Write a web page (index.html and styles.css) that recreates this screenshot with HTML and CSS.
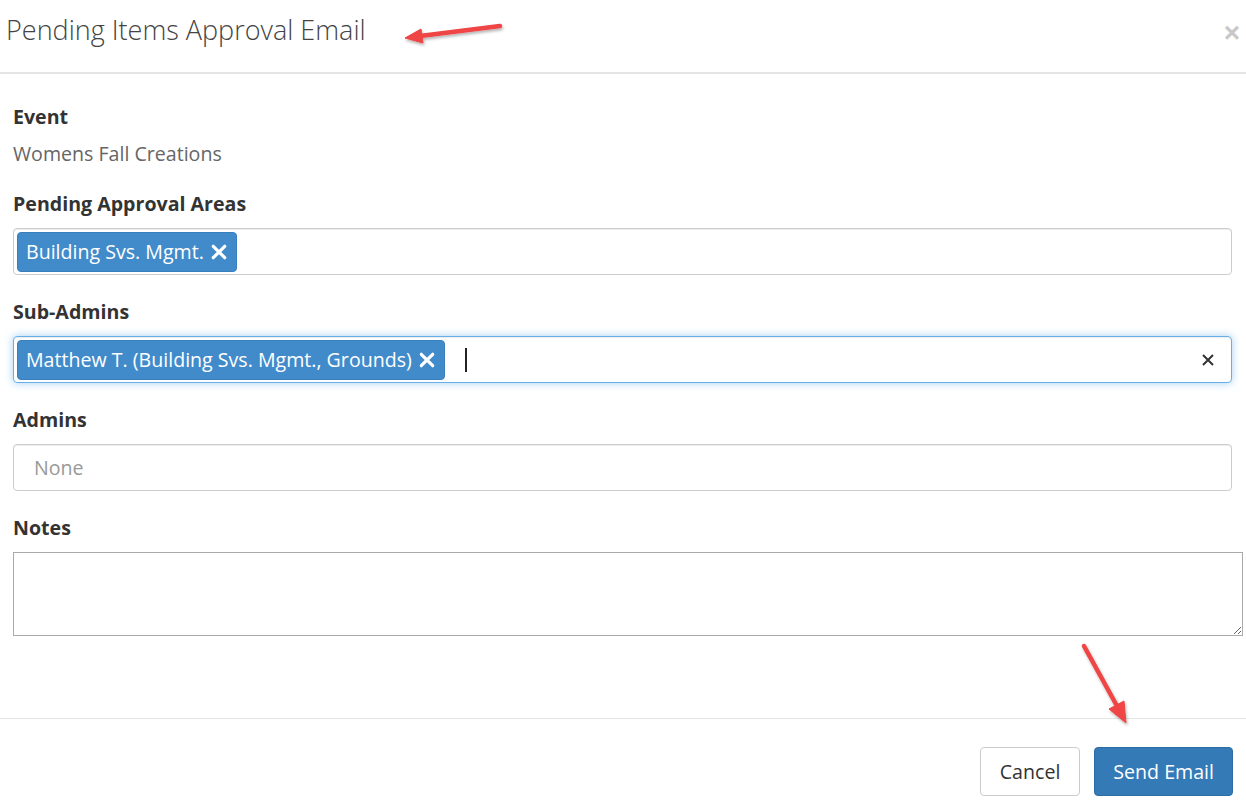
FILE: index.html
```html
<!DOCTYPE html>
<html lang="en">
<head>
    <meta charset="UTF-8">
    <meta name="viewport" content="width=device-width, initial-scale=1.0">
    <title>Pending Items Approval Email</title>
    <link rel="stylesheet" href="styles.css">
</head>
<body>
    <div class="modal">
        <div class="modal-header">
            <h4 class="modal-title">Pending Items Approval Email</h4>
            <button class="close" type="button">&times;</button>
        </div>

        <div class="modal-body">
            <div class="form-group">
                <label>Event</label>
                <div class="static">Womens Fall Creations</div>
            </div>

            <div class="form-group">
                <label>Pending Approval Areas</label>
                <div class="tag-input">
                    <span class="tag">Building Svs. Mgmt.
                        <svg class="tag-x" viewBox="0 0 14 14"><path d="M2 2L12 12M12 2L2 12"/></svg>
                    </span>
                </div>
            </div>

            <div class="form-group">
                <label>Sub-Admins</label>
                <div class="tag-input focused">
                    <span class="tag">Matthew T. (Building Svs. Mgmt., Grounds)
                        <svg class="tag-x" viewBox="0 0 14 14"><path d="M2 2L12 12M12 2L2 12"/></svg>
                    </span>
                    <span class="caret"></span>
                    <svg class="clear-x" viewBox="0 0 12 12"><path d="M1 1L11 11M11 1L1 11"/></svg>
                </div>
            </div>

            <div class="form-group">
                <label>Admins</label>
                <input class="form-control" type="text" placeholder="None">
            </div>

            <div class="form-group">
                <label>Notes</label>
                <textarea class="notes"></textarea>
            </div>
        </div>

        <div class="modal-footer">
            <button class="btn btn-default" type="button">Cancel</button>
            <button class="btn btn-primary" type="button">Send Email</button>
        </div>

        <!-- annotation arrows -->
        <svg class="arrows" viewBox="0 0 1246 801">
            <defs>
                <filter id="shadow" x="-20%" y="-20%" width="140%" height="140%">
                    <feDropShadow dx="1" dy="2" stdDeviation="1.5" flood-color="#000" flood-opacity="0.3"/>
                </filter>
            </defs>
            <g filter="url(#shadow)" fill="#f04444" stroke="#f04444">
                <line x1="500" y1="26" x2="420" y2="36" stroke-width="4.5" stroke-linecap="round"/>
                <polygon points="405,38 421,29 423,43" stroke-width="1" stroke-linejoin="round"/>
                <line x1="1084" y1="646" x2="1117" y2="706" stroke-width="4.5" stroke-linecap="round"/>
                <polygon points="1126,723 1109,709 1124,701" stroke-width="1" stroke-linejoin="round"/>
            </g>
        </svg>
    </div>
</body>
</html>
```

FILE: styles.css
```css
* {
    box-sizing: border-box;
    margin: 0;
    padding: 0;
}

body {
    font-family: 'Open Sans', 'Liberation Sans', sans-serif;
    font-size: 19.6px;
    line-height: 26px;
    color: #333;
    background: #fff;
}

.modal {
    position: relative;
    width: 1246px;
    height: 801px;
    display: flex;
    flex-direction: column;
    overflow: hidden;
}

.modal-header {
    height: 74px;
    padding: 12px 6px 0 6px;
    border-bottom: 2px solid #e5e5e5;
    display: flex;
    justify-content: space-between;
    align-items: flex-start;
}

.modal-title {
    font-size: 27px;
    font-weight: 300;
    line-height: 36px;
    color: #444;
}

.close {
    border: 0;
    background: none;
    font-family: 'Liberation Sans', Arial, sans-serif;
    font-size: 28px;
    font-weight: 700;
    line-height: 20px;
    color: #c8c8c8;
    margin: 11px 0 0 0;
    cursor: pointer;
}

.modal-body {
    flex: 1;
    padding: 30px 14px 0 13px;
}

.form-group {
    margin-bottom: 24px;
}

label {
    display: block;
    font-weight: 700;
    margin-bottom: 11px;
}

.static {
    color: #666;
}

.tag-input {
    height: 47px;
    border: 1px solid #ccc;
    border-radius: 4px;
    padding: 2px 3px;
    display: flex;
    align-items: center;
    box-shadow: inset 0 1px 1px rgba(0, 0, 0, 0.075);
}

.tag-input.focused {
    border-color: #66afe9;
    box-shadow: inset 0 1px 1px rgba(0, 0, 0, 0.075), 0 0 8px rgba(102, 175, 233, 0.6);
}

.tag {
    height: 40px;
    display: inline-flex;
    align-items: center;
    gap: 7px;
    padding: 0 9px 0 8px;
    background: #428bca;
    border: 1px solid #3a7fbd;
    border-radius: 4px;
    color: #fff;
    white-space: nowrap;
}

.tag-x {
    width: 16px;
    height: 16px;
    fill: none;
    stroke: #fff;
    stroke-width: 2.8;
    stroke-linecap: round;
}

.caret {
    width: 2px;
    height: 24px;
    background: #222;
    margin-left: 20px;
}

.clear-x {
    width: 12px;
    height: 12px;
    margin-left: auto;
    margin-right: 14px;
    fill: none;
    stroke: #333;
    stroke-width: 2;
}

.form-control {
    display: block;
    width: 100%;
    height: 47px;
    padding: 0 20px;
    border: 1px solid #ccc;
    border-radius: 4px;
    font-family: inherit;
    font-size: 19.6px;
    color: #555;
    box-shadow: inset 0 1px 1px rgba(0, 0, 0, 0.075);
    outline: none;
}

.form-control::placeholder {
    color: #999;
}

.notes {
    display: block;
    width: calc(100% + 11px);
    height: 84px;
    border: 1px solid #a9a9a9;
    border-radius: 0;
    font-family: inherit;
    font-size: 19.6px;
    outline: none;
}

.modal-footer {
    border-top: 1px solid #e5e5e5;
    padding: 28px 13px 5px;
    display: flex;
    justify-content: flex-end;
    gap: 14px;
}

.btn {
    height: 49px;
    padding: 0 19px;
    border: 1px solid transparent;
    border-radius: 4px;
    font-family: inherit;
    font-size: 19.6px;
    cursor: pointer;
}

.btn-default {
    background: #fff;
    border-color: #ccc;
    color: #333;
}

.btn-primary {
    padding: 0 18px;
    background: #337ab7;
    border-color: #2e6da4;
    color: #fff;
}

.arrows {
    position: absolute;
    top: 0;
    left: 0;
    width: 1246px;
    height: 801px;
    pointer-events: none;
}
```
